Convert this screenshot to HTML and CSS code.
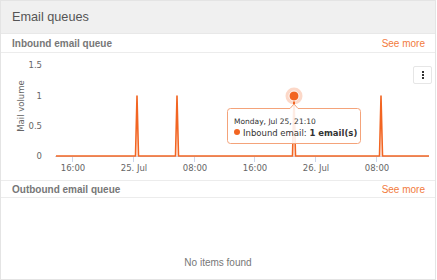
FILE: index.html
```html
<!DOCTYPE html>
<html>
<head>
<meta charset="utf-8">
<link rel="stylesheet" href="styles.css">
</head>
<body>
<div class="widget">
  <div class="widget-header">Email queues</div>
  <div class="section-head">
    <span class="section-title">Inbound email queue</span>
    <a class="see-more">See more</a>
  </div>
  <div class="chart">
    <svg class="chart-svg" width="435" height="127" viewBox="0 0 435 127">
      <text class="axis-title" transform="translate(23,53) rotate(-90)" text-anchor="middle">Mail volume</text>
      <g class="ylabels" text-anchor="end">
        <text x="41" y="15">1.5</text>
        <text x="41" y="46">1</text>
        <text x="41" y="76">0.5</text>
        <text x="41" y="106">0</text>
      </g>
      <line x1="54" y1="103.5" x2="428" y2="103.5" stroke="#ccd6eb" stroke-width="1"/>
      <g stroke="#ccd6eb" stroke-width="1">
        <line x1="71.5" y1="103" x2="71.5" y2="109"/>
        <line x1="132.5" y1="103" x2="132.5" y2="109"/>
        <line x1="193.5" y1="103" x2="193.5" y2="109"/>
        <line x1="253.5" y1="103" x2="253.5" y2="109"/>
        <line x1="314.5" y1="103" x2="314.5" y2="109"/>
        <line x1="375.5" y1="103" x2="375.5" y2="109"/>
      </g>
      <g class="xlabels" text-anchor="middle">
        <text x="72" y="118">16:00</text>
        <text x="133" y="118">25. Jul</text>
        <text x="194" y="118">08:00</text>
        <text x="254" y="118">16:00</text>
        <text x="315" y="118">26. Jul</text>
        <text x="376" y="118">08:00</text>
      </g>
      <polyline fill="none" stroke="#f26522" stroke-width="1.6" stroke-linejoin="round"
        points="55,103 134.5,103 136,43 137.5,103 174.5,103 176,43 177.5,103 291.5,103 293,43 294.5,103 378.5,103 380,43 381.5,103 428,103"/>
      <circle cx="293" cy="43" r="8.5" fill="#f26522" fill-opacity="0.25"/>
      <circle cx="293" cy="43" r="5" fill="#f26522" stroke="#fff" stroke-width="1"/>
      <path class="tip-box" d="M229.5,55.5 H289 L293,51 L297,55.5 H356.5 A3,3 0 0 1 359.5,58.5 V87.5 A3,3 0 0 1 356.5,90.5 H229.5 A3,3 0 0 1 226.5,87.5 V58.5 A3,3 0 0 1 229.5,55.5 Z"/>
      <text class="tip-date" x="233" y="71">Monday, Jul 25, 21:10</text>
      <circle cx="236" cy="79" r="3" fill="#f26522"/>
      <text class="tip-line" x="242" y="82.5">Inbound email: <tspan font-weight="bold">1 email(s)</tspan></text>
    </svg>
    <button class="chart-menu" aria-label="Chart menu">
      <span class="dot"></span><span class="dot"></span><span class="dot"></span>
    </button>
  </div>
  <div class="section-head outbound">
    <span class="section-title">Outbound email queue</span>
    <a class="see-more">See more</a>
  </div>
  <div class="empty">No items found</div>
</div>
</body>
</html>
```

FILE: styles.css
```css
* { box-sizing: border-box; }
html, body { margin: 0; padding: 0; background: #fff; }
body { font-family: "Liberation Sans", Arial, sans-serif; }

.widget {
  width: 436px;
  height: 280px;
  border: 1px solid #e4e4e4;
  display: flex;
  flex-direction: column;
  overflow: hidden;
}

.widget-header {
  height: 33px;
  flex: none;
  background: #f0f0f0;
  border-bottom: 1px solid #e8e8e8;
  color: #555;
  font-size: 12.7px;
  padding-left: 11px;
  display: flex;
  align-items: center;
}

.section-head {
  height: 19px;
  flex: none;
  border-bottom: 1px solid #ececec;
  display: flex;
  align-items: center;
  justify-content: space-between;
  padding: 0 10px 0 11px;
}
.section-head.outbound {
  height: 18px;
  border-top: 1px solid #ececec;
}
.section-title {
  font-size: 10px;
  font-weight: bold;
  color: #777;
}
.see-more {
  font-size: 10px;
  color: #f27b3d;
  cursor: pointer;
}

.chart {
  height: 127px;
  flex: none;
  position: relative;
}
.chart-svg { display: block; }
.chart-svg text {
  font-family: "DejaVu Sans", Verdana, sans-serif;
  font-size: 8.5px;
  fill: #666;
}
.chart-svg .axis-title { font-size: 8.5px; fill: #666; }
.tip-box {
  fill: #fff;
  fill-opacity: 0.88;
  stroke: #f4a37a;
  stroke-width: 1;
}
.chart-svg .tip-date { font-size: 7.5px; fill: #333; }
.chart-svg .tip-line { font-size: 8.5px; fill: #333; }

.chart-menu {
  position: absolute;
  left: 412px;
  top: 13px;
  width: 19px;
  height: 18px;
  padding: 0;
  background: #fff;
  border: 1px solid #e6e6e6;
  border-radius: 2px;
  display: flex;
  flex-direction: column;
  align-items: center;
  justify-content: center;
  gap: 1px;
}
.chart-menu .dot {
  width: 2px;
  height: 2px;
  background: #333;
}

.empty {
  flex: 1;
  display: flex;
  justify-content: center;
  padding-top: 59px;
  font-size: 10px;
  color: #777;
}
```
